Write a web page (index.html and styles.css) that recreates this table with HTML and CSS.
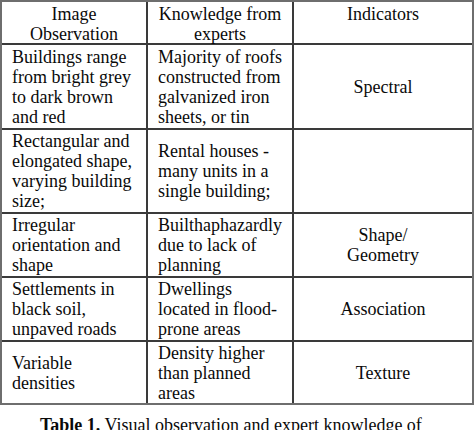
FILE: index.html
```html
<!DOCTYPE html>
<html>
<head>
<meta charset="utf-8">
<link rel="stylesheet" href="styles.css">
</head>
<body>
<div class="table">
  <div class="cell head">Image<br>Observation</div>
  <div class="cell head">Knowledge from<br>experts</div>
  <div class="cell head">Indicators</div>

  <div class="cell">Buildings range<br>from bright grey<br>to dark brown<br>and red</div>
  <div class="cell">Majority of roofs<br>constructed from<br>galvanized iron<br>sheets, or tin</div>
  <div class="cell ind">Spectral</div>

  <div class="cell">Rectangular and<br>elongated shape,<br>varying building<br>size;</div>
  <div class="cell">Rental houses -<br>many units in a<br>single building;</div>
  <div class="cell ind"></div>

  <div class="cell">Irregular<br>orientation and<br>shape</div>
  <div class="cell">Builthaphazardly<br>due to lack of<br>planning</div>
  <div class="cell ind">Shape/<br>Geometry</div>

  <div class="cell">Settlements in<br>black soil,<br>unpaved roads</div>
  <div class="cell">Dwellings<br>located in flood-<br>prone areas</div>
  <div class="cell ind">Association</div>

  <div class="cell">Variable<br>densities</div>
  <div class="cell">Density higher<br>than planned<br>areas</div>
  <div class="cell ind">Texture</div>
</div>
<p class="caption"><b>Table 1.</b> Visual observation and expert knowledge of</p>
</body>
</html>
```

FILE: styles.css
```css
html, body {
  margin: 0;
  padding: 0;
  background: #ffffff;
}
body {
  width: 474px;
  height: 430px;
  overflow: hidden;
  font-family: "Liberation Serif", "Times New Roman", serif;
  font-size: 18px;
  line-height: 20px;
  color: #0a0a0a;
}
.table {
  display: grid;
  grid-template-columns: 144px 144px 178px;
  grid-template-rows: 41px 83px 82px 62px 62px 61px;
  gap: 2px;
  background: #3a3a3a;
  border: 2px solid #6e6e6e;
  width: 470px;
}
.cell {
  background: #ffffff;
  padding: 0 10px;
  display: flex;
  flex-direction: column;
  justify-content: center;
  white-space: nowrap;
}
.cell.head {
  justify-content: flex-start;
  padding-top: 2px;
  text-align: center;
}
.cell.ind {
  text-align: center;
}
.caption {
  margin: 10px 0 0 0;
  padding-left: 40px;
  line-height: 20px;
}
```
